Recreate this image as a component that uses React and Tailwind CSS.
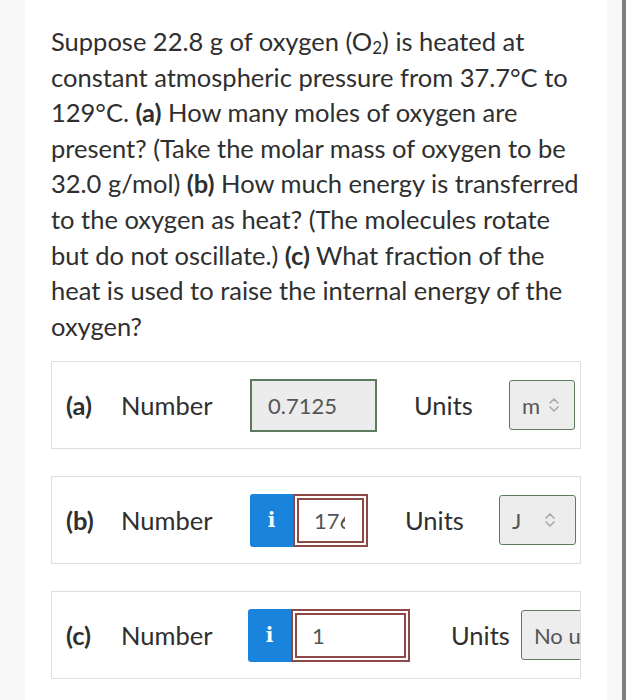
const lines = [
  <>Suppose 22.8 g of oxygen (O<sub className="text-[17px] relative top-[3px] align-baseline">2</sub>) is heated at</>,
  <>constant atmospheric pressure from 37.7°C to</>,
  <>129°C. <b>(a)</b> How many moles of oxygen are</>,
  <>present? (Take the molar mass of oxygen to be</>,
  <>32.0 g/mol) <b>(b)</b> How much energy is transferred</>,
  <>to the oxygen as heat? (The molecules rotate</>,
  <>but do not oscillate.) <b>(c)</b> What fraction of the</>,
  <>heat is used to raise the internal energy of the</>,
  <>oxygen?</>,
]

const Chevron = () => (
  <svg width="12" height="16" viewBox="0 0 12 16" fill="none" stroke="#a8a8a8" strokeWidth="1.6" strokeLinecap="round" strokeLinejoin="round">
    <path d="M2 6 L6 2 L10 6" />
    <path d="M2 10 L6 14 L10 10" />
  </svg>
)

const InfoButton = () => (
  <div className="w-[43px] h-[53px] shrink-0 bg-[#1a83dc] rounded-l-[3px] flex items-center justify-center text-white font-bold text-[20px] font-['DejaVu_Serif',serif]">
    i
  </div>
)

const Select = ({ value, width, gap, clip }) => (
  <div
    className={`h-[50px] border-[1.5px] border-[#5d7c5d] bg-[#ededed] rounded-[3px] flex items-center pl-[12px] text-[22px] text-[#555] shrink-0 ${width} ${gap} ${clip ? "rounded-r-none" : ""}`}
  >
    <span className="whitespace-nowrap">{value}</span>
    {!clip && <Chevron />}
  </div>
)

const Row = ({ tag, numW, children }) => (
  <div className="w-[530px] h-[88px] border border-[#dedede] flex items-center pl-[14px] overflow-hidden">
    <span className="w-[55px] shrink-0 font-bold">{tag}</span>
    <span className={`${numW} shrink-0`}>Number</span>
    {children}
  </div>
)

export default function App() {
  return (
    <div className="w-[632px] h-[700px] flex bg-white font-['Lato',sans-serif] text-[#2f2f2f] overflow-hidden">
      <div className="w-[25px] bg-[#f8f8f8]" />
      <div className="w-[582px] bg-white pl-[26px] pt-[24px]">
        <div className="text-[25.5px] leading-[35.6px]">
          {lines.map((l, i) => (
            <div key={i} className="whitespace-nowrap">{l}</div>
          ))}
        </div>
        <div className="mt-[17px] flex flex-col gap-[27px] text-[25.5px]">
          <Row tag="(a)" numW="w-[129px]">
            <div className="w-[127px] h-[53px] border-2 border-[#5d7a5d] bg-[#ececec] flex items-center pl-[16px] text-[22px] text-[#555] shrink-0">
              0.7125
            </div>
            <span className="ml-[37px] shrink-0">Units</span>
            <Select value="m" width="w-[66px]" gap="gap-[8px] ml-[36px]" />
          </Row>
          <Row tag="(b)" numW="w-[129px]">
            <InfoButton />
            <div className="w-[75px] h-[53px] border-[6px] border-double border-[#8d4848] bg-white flex items-center pl-[15px] text-[22px] text-[#555] shrink-0">
              <span className="w-[31px] shrink-0 overflow-hidden whitespace-nowrap">176</span>
            </div>
            <span className="ml-[37px] shrink-0">Units</span>
            <Select value="J" width="w-[77px]" gap="gap-[23px] ml-[35px]" />
          </Row>
          <Row tag="(c)" numW="w-[127px]">
            <InfoButton />
            <div className="w-[119px] h-[53px] border-[6px] border-double border-[#8d4848] bg-white flex items-center pl-[15px] text-[22px] text-[#555] shrink-0">
              1
            </div>
            <span className="ml-[41px] shrink-0">Units</span>
            <Select value="No units" width="w-[100px]" gap="ml-[11px]" clip />
          </Row>
        </div>
      </div>
      <div className="w-[15px] bg-[#f8f8f8]" />
      <div className="w-[4px] bg-[#7f7f7f]" />
      <div className="w-[6px] bg-white" />
    </div>
  )
}
